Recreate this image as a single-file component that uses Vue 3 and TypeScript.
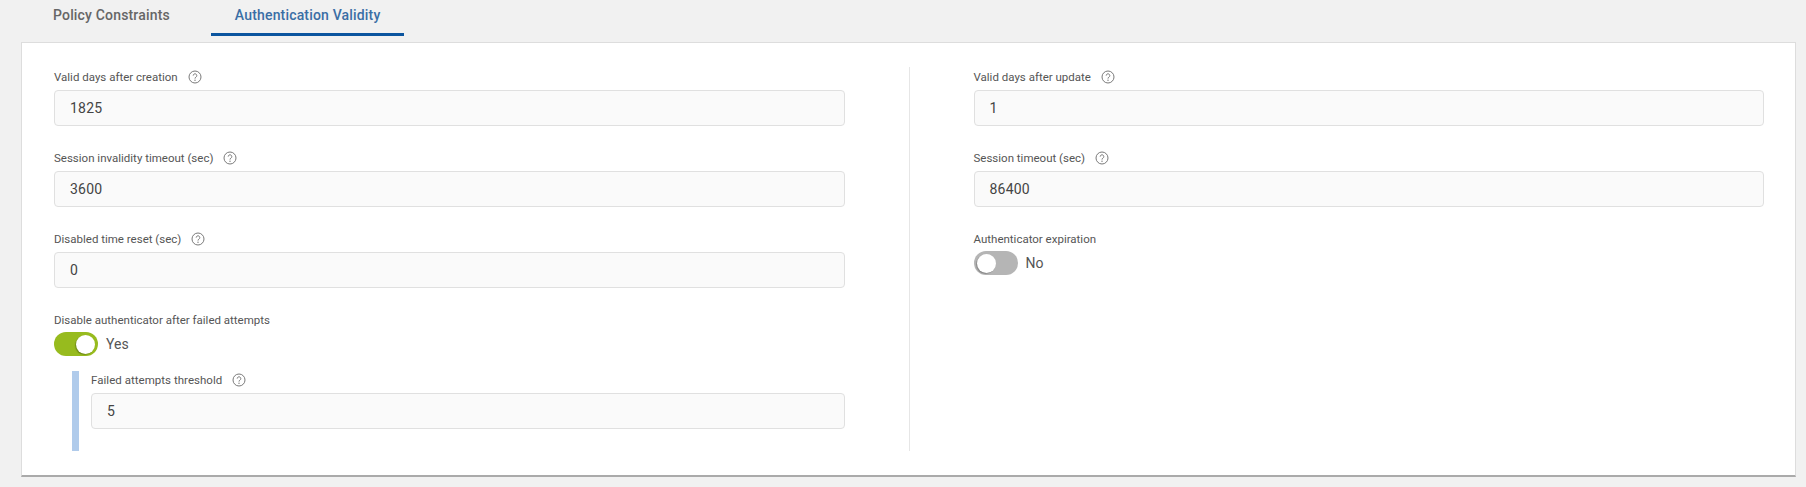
<script setup lang="ts">
interface Field { label: string; value: string }
const left: Field[] = [
  { label: 'Valid days after creation', value: '1825' },
  { label: 'Session invalidity timeout (sec)', value: '3600' },
  { label: 'Disabled time reset (sec)', value: '0' },
]
const right: Field[] = [
  { label: 'Valid days after update', value: '1' },
  { label: 'Session timeout (sec)', value: '86400' },
]
</script>

<template>
  <div class="page">
    <div class="tabs">
      <div class="tab">Policy Constraints</div>
      <div class="tab active">Authentication Validity</div>
    </div>
    <div class="card">
      <div class="col">
        <div v-for="f in left" :key="f.label" class="field">
          <div class="label">
            <span>{{ f.label }}</span>
            <svg class="hint" viewBox="0 0 14 14" width="14" height="14">
              <circle cx="7" cy="7" r="6" fill="none" stroke="#7a7a7a" stroke-width="1" />
              <path d="M5.2 5.6a1.8 1.8 0 1 1 2.8 1.5c-.7.4-1 .7-1 1.5" fill="none" stroke="#7a7a7a" stroke-width="1" />
              <circle cx="7" cy="10.2" r=".7" fill="#7a7a7a" />
            </svg>
          </div>
          <div class="input">{{ f.value }}</div>
        </div>
        <div class="toggle-block">
          <div class="label">Disable authenticator after failed attempts</div>
          <div class="toggle-row">
            <span class="switch on"><span class="knob"></span></span>
            <span class="toggle-text">Yes</span>
          </div>
        </div>
        <div class="nested">
          <div class="label">
            <span>Failed attempts threshold</span>
            <svg class="hint" viewBox="0 0 14 14" width="14" height="14">
              <circle cx="7" cy="7" r="6" fill="none" stroke="#7a7a7a" stroke-width="1" />
              <path d="M5.2 5.6a1.8 1.8 0 1 1 2.8 1.5c-.7.4-1 .7-1 1.5" fill="none" stroke="#7a7a7a" stroke-width="1" />
              <circle cx="7" cy="10.2" r=".7" fill="#7a7a7a" />
            </svg>
          </div>
          <div class="input">5</div>
        </div>
      </div>
      <div class="divider"></div>
      <div class="col">
        <div v-for="f in right" :key="f.label" class="field">
          <div class="label">
            <span>{{ f.label }}</span>
            <svg class="hint" viewBox="0 0 14 14" width="14" height="14">
              <circle cx="7" cy="7" r="6" fill="none" stroke="#7a7a7a" stroke-width="1" />
              <path d="M5.2 5.6a1.8 1.8 0 1 1 2.8 1.5c-.7.4-1 .7-1 1.5" fill="none" stroke="#7a7a7a" stroke-width="1" />
              <circle cx="7" cy="10.2" r=".7" fill="#7a7a7a" />
            </svg>
          </div>
          <div class="input">{{ f.value }}</div>
        </div>
        <div class="toggle-block">
          <div class="label">Authenticator expiration</div>
          <div class="toggle-row">
            <span class="switch"><span class="knob"></span></span>
            <span class="toggle-text">No</span>
          </div>
        </div>
      </div>
    </div>
  </div>
</template>

<style>
html, body { margin: 0; background: #f1f1f1; }
</style>

<style scoped>
.page {
  height: 487px;
  box-sizing: border-box;
  background: #f1f1f1;
  font-family: Roboto, "Liberation Sans", sans-serif;
  padding: 0 10px 0 21px;
  overflow: hidden;
}
.tabs {
  display: flex;
  gap: 17px;
  height: 36px;
  margin-bottom: 6px;
  padding-left: 8px;
}
.tab {
  box-sizing: border-box;
  height: 36px;
  padding: 6px 24px 0;
  font-size: 14px;
  line-height: 19px;
  font-weight: 500;
  letter-spacing: 0.17px;
  color: #666;
}
.tab.active {
  color: #3a6ea5;
  border-bottom: 3px solid #0b559f;
}
.card {
  box-sizing: border-box;
  height: 435px;
  display: flex;
  background: #fff;
  border: 1px solid #ddd;
  border-bottom: 2px solid #aaa;
  padding: 24px 31px 24px 32px;
}
.col {
  flex: 1 1 0;
  min-width: 0;
}
.divider {
  width: 1px;
  background: #e6e6e6;
  margin: 0 64px;
}
.field {
  margin-bottom: 22px;
}
.label {
  display: flex;
  align-items: center;
  gap: 10px;
  box-sizing: border-box;
  height: 23px;
  padding-bottom: 4px;
  font-size: 11.5px;
  line-height: 14px;
  color: #555;
}
.hint {
  flex: none;
}
.input {
  box-sizing: border-box;
  height: 36px;
  border: 1px solid #e0e0e0;
  border-radius: 4px;
  background: #fafafa;
  padding: 0 15px;
  font-size: 14px;
  line-height: 34px;
  letter-spacing: 0.2px;
  color: #444;
}
.toggle-row {
  display: flex;
  align-items: center;
  gap: 8px;
  height: 24px;
  margin-top: -1px;
}
.switch {
  display: flex;
  align-items: center;
  box-sizing: border-box;
  width: 44px;
  height: 24px;
  border-radius: 12px;
  background: #b5b5b5;
  padding: 0 3px;
}
.switch.on {
  background: #97bb1e;
  justify-content: flex-end;
}
.knob {
  width: 19px;
  height: 19px;
  border-radius: 50%;
  background: #fff;
  box-shadow: -1px 1px 1px rgba(0, 0, 0, 0.25);
}
.toggle-text {
  font-size: 14px;
  color: #555;
}
.nested {
  height: 80px;
  margin: 15px 0 0 18px;
  padding-left: 12px;
  border-left: 7px solid #b0cbeb;
}
.nested .label {
  height: 22px;
  padding-bottom: 5px;
  letter-spacing: 0.03px;
}
</style>
